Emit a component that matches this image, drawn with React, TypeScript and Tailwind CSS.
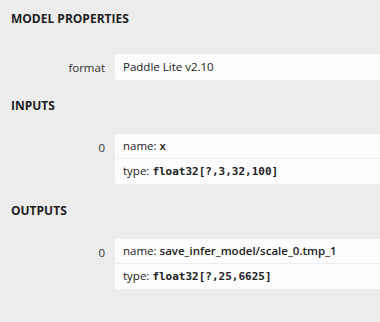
const sans = "font-['Open_Sans','Noto_Sans',sans-serif]"
const mono = "font-['DejaVu_Sans_Mono','Liberation_Mono',monospace]"

function Header({ title, className }: { title: string; className: string }) {
  return <div className={`pl-[11px] text-[12px] font-bold uppercase leading-[15px] text-[#1e1e1e] ${className}`}>{title}</div>
}

function Row({ label, children }: { label: string; children: React.ReactNode }) {
  return (
    <div className="flex">
      <div className="w-[105px] shrink-0 pt-[5px] text-right text-[11.5px] leading-[18px] text-[#333]">{label}</div>
      <div className="ml-[10px] flex-1 overflow-hidden rounded-l-[3px] bg-[#fcfcfc]">{children}</div>
    </div>
  )
}

function Line({ children, last }: { children: React.ReactNode; last?: boolean }) {
  return (
    <div className={`px-[8px] py-[3px] text-[11.5px] leading-[18px] text-[#222] whitespace-nowrap ${last ? '' : 'border-b border-[#eeeeee]'}`}>
      {children}
    </div>
  )
}

export default function App() {
  return (
    <div className={`h-[322px] w-[380px] overflow-hidden bg-[#ececec] ${sans}`}>
      <Header title="Model Properties" className="pt-[11px]" />
      <div className="mt-[28px]">
        <Row label="format">
          <div className="px-[8px] py-[4px] text-[11.5px] leading-[18px] text-[#222]">Paddle Lite v2.10</div>
        </Row>
      </div>
      <Header title="Inputs" className="mt-[18px]" />
      <div className="mt-[21px]">
        <Row label="0">
          <Line>
            name: <span className="font-semibold">x</span>
          </Line>
          <Line last>
            type: <span className={`${mono} text-[11px] font-semibold`}>float32[?,3,32,100]</span>
          </Line>
        </Row>
      </div>
      <Header title="Outputs" className="mt-[19px]" />
      <div className="mt-[21px]">
        <Row label="0">
          <Line>
            name: <span className="font-semibold">save_infer_model/scale_0.tmp_1</span>
          </Line>
          <Line last>
            type: <span className={`${mono} text-[11px] font-semibold`}>float32[?,25,6625]</span>
          </Line>
        </Row>
      </div>
    </div>
  )
}
